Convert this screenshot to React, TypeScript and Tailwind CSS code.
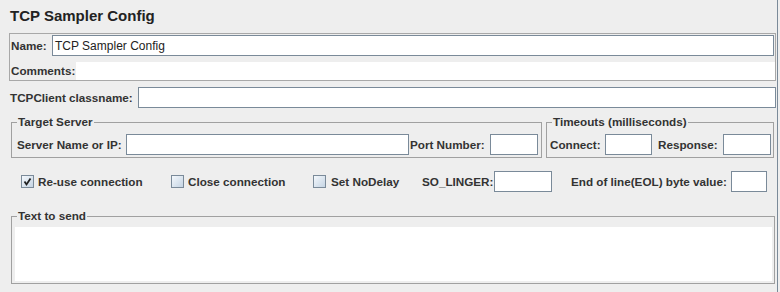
import React from "react";

const font = "font-['Liberation_Sans',Arial,sans-serif]";

const Field = ({ className = "" }: { className?: string }) => (
  <div className={`h-[21px] shrink-0 border border-[#7a8a99] bg-white ${className}`} />
);

const Check = ({ checked }: { checked?: boolean }) => (
  <div className="flex h-[13px] w-[13px] shrink-0 items-center justify-center border border-[#7a8a99] bg-gradient-to-br from-[#f4f8fc] to-[#c5d4e3]">
    {checked && (
      <svg width="11" height="11" viewBox="0 0 11 11">
        <path d="M2.5 5.5 L4.5 8.5 L8.5 2.5" fill="none" stroke="#222" strokeWidth="1.8" />
      </svg>
    )}
  </div>
);

export default function App() {
  return (
    <div className={`flex h-[292px] w-[780px] bg-[#eeeeee] text-[11.7px] font-bold leading-[14px] text-[#333333] ${font}`}>
      <div className="flex w-[778px] flex-col border-r border-[#7a8a99]">
        {/* title */}
        <div className="h-[33px] pl-[10px] pt-[6px] text-[15px] leading-[20px] text-[#222]">
          TCP Sampler Config
        </div>

        {/* name / comments */}
        <div className="ml-[9px] flex h-[48px] w-[767px] flex-col border border-[#a8a8a8] pt-[1px]">
          <div className="flex h-[21px] items-center">
            <span className="w-[42px] pl-[1px]">Name:</span>
            <div className="mr-[1px] flex h-[21px] flex-1 items-center border border-[#7a8a99] bg-white pl-[2px] text-[12px] font-normal text-[#222]">
              TCP Sampler Config
            </div>
          </div>
          <div className="mt-[6px] flex h-[18px] items-center">
            <span className="w-[66px] pl-[1px]">Comments:</span>
            <div className="h-[18px] flex-1 bg-white" />
          </div>
        </div>

        {/* classname */}
        <div className="mt-[6px] flex h-[21px] items-center">
          <span className="w-[138px] pl-[10px]">TCPClient classname:</span>
          <Field className="w-[638px]" />
        </div>

        {/* target server + timeouts */}
        <div className="mt-[7px] flex pl-[11px]">
          <fieldset className="w-[531px] border border-[#a0a0a0] pb-[2px] pl-[5px] pr-[3px] pt-[5px]">
            <legend className="px-[1px]">Target Server</legend>
            <div className="flex items-center">
              <span className="w-[109px]">Server Name or IP:</span>
              <Field className="w-[283px]" />
              <span className="ml-[1px] w-[80px]">Port Number:</span>
              <Field className="w-[48px]" />
            </div>
          </fieldset>
          <fieldset className="ml-[4px] w-[228px] border border-[#a0a0a0] pb-[2px] pl-[3px] pt-[5px]">
            <legend className="ml-[2px] px-[1px]">Timeouts (milliseconds)</legend>
            <div className="flex items-center">
              <span className="w-[55px]">Connect:</span>
              <Field className="w-[47px]" />
              <span className="ml-[6px] w-[65px]">Response:</span>
              <Field className="w-[48px]" />
            </div>
          </fieldset>
        </div>

        {/* options */}
        <div className="mt-[13px] flex h-[21px] items-center pl-[21px]">
          <div className="flex w-[150px] items-center gap-[4px]">
            <Check checked />
            <span>Re-use connection</span>
          </div>
          <div className="flex w-[142px] items-center gap-[4px]">
            <Check />
            <span>Close connection</span>
          </div>
          <div className="flex w-[109px] items-center gap-[5px]">
            <Check />
            <span>Set NoDelay</span>
          </div>
          <span className="w-[72px]">SO_LINGER:</span>
          <Field className="w-[58px]" />
          <span className="ml-[19px] w-[160px]">End of line(EOL) byte value:</span>
          <Field className="w-[36px]" />
        </div>

        {/* text to send */}
        <fieldset className="ml-[11px] mt-[17px] w-[764px] border border-[#a0a0a0] pb-[2px] pl-[3px] pr-[2px] pt-[4px]">
          <legend className="ml-[2px] px-[1px]">Text to send</legend>
          <div className="h-[54px] bg-white" />
        </fieldset>
      </div>
    </div>
  );
}
